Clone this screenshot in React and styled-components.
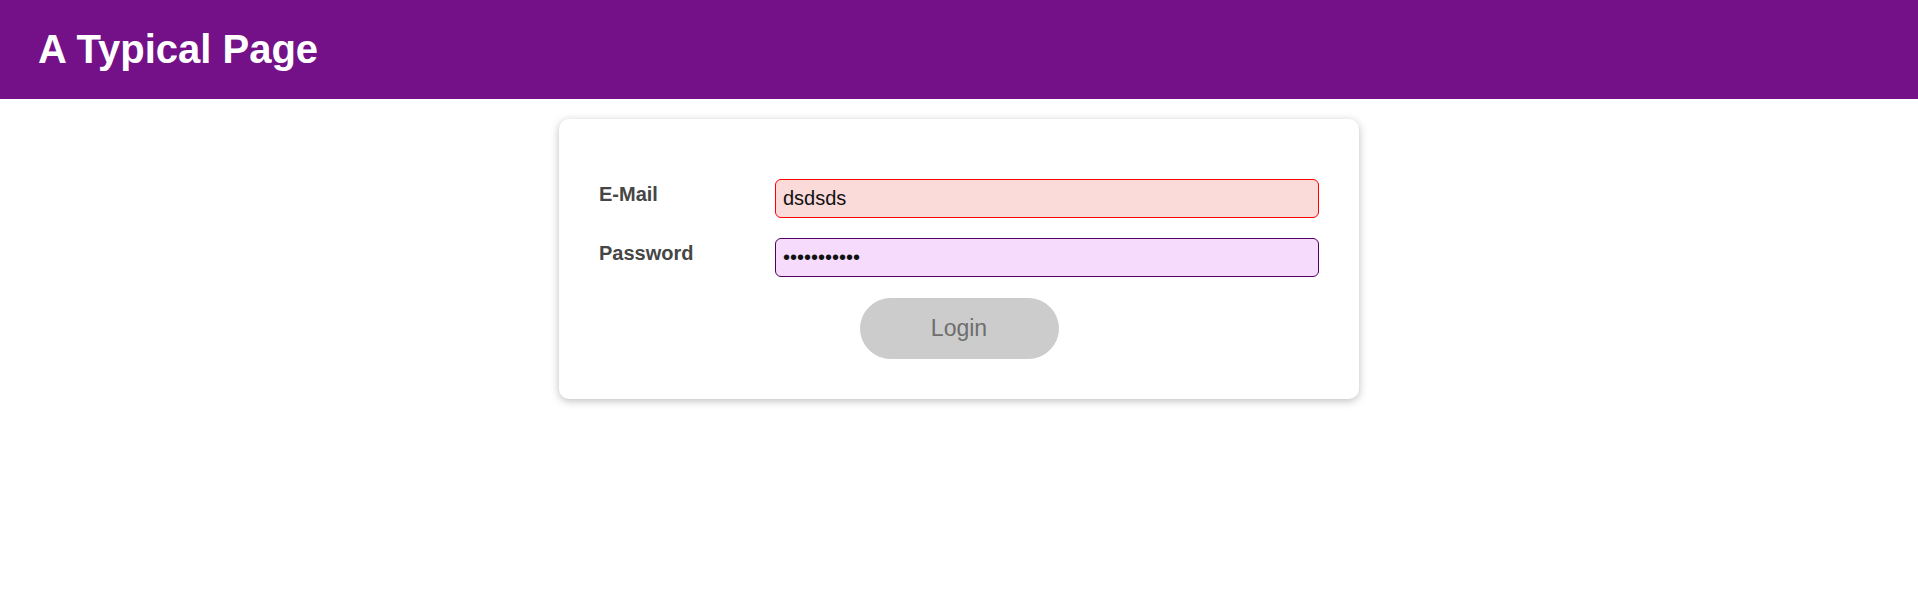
import { useState } from "react";
import styled, { createGlobalStyle } from "styled-components";

const GlobalStyle = createGlobalStyle`
    * { box-sizing: border-box; }
    html, body {
        margin: 0;
        background: #fff;
        font-family: "Liberation Sans", Arial, sans-serif;
        font-size: 20px;
    }
`
const Header = styled("header")`
    height: 99px;
    background: #741188;
    display: flex;
    align-items: center;
    padding: 0 38px;
    h1 {
        margin: 0;
        color: #fff;
        font-size: 40px;
        font-weight: bold;
    }
`
const Card = styled("div")`
    width: 800px;
    margin: 20px auto;
    padding: 40px 40px 40px;
    background: #fff;
    border-radius: 10px;
    box-shadow: 0 2px 8px rgba(0, 0, 0, 0.26);
`
const Form = styled("form")`
    display: flex;
    flex-direction: column;
    gap: 20px;
    padding-top: 20px;
`
const Control = styled("div")`
    display: flex;
    align-items: center;
`
const Label = styled("label")`
    width: 176px;
    flex-shrink: 0;
    font-weight: bold;
    font-size: 20px;
    color: #464646;
    margin-bottom: 9px;
`
const Input = styled("input")`
    flex: 1;
    min-width: 0;
    font: inherit;
    font-size: 20px;
    height: 39px;
    padding: 0 7px;
    border-radius: 6px;
    outline: none;
    color: #111;
    border: 1px solid ${(p) => (p.$invalid ? "red" : "#4f005f")};
    background: ${(p) => (p.$invalid ? "#fbdada" : "#f6dbfc")};
`
const Actions = styled("div")`
    text-align: center;
    padding-top: 1px;
`
const Button = styled("button")`
    font-family: inherit;
    font-size: 23px;
    width: 199px;
    height: 61px;
    border: 1px solid #ccc;
    border-radius: 31px;
    background: #ccc;
    color: #6e6e6e;
    cursor: not-allowed;
`

export default function App() {
    const [email, setEmail] = useState("dsdsds");
    const [password, setPassword] = useState("12345678901");
    return (
        <>
            <GlobalStyle />
            <Header>
                <h1>A Typical Page</h1>
            </Header>
            <Card>
                <Form onSubmit={(e) => e.preventDefault()}>
                    <Control>
                        <Label htmlFor="email">E-Mail</Label>
                        <Input id="email" type="email" $invalid value={email} onChange={(e) => setEmail(e.target.value)} />
                    </Control>
                    <Control>
                        <Label htmlFor="password">Password</Label>
                        <Input id="password" type="password" value={password} onChange={(e) => setPassword(e.target.value)} />
                    </Control>
                    <Actions>
                        <Button type="submit" disabled>Login</Button>
                    </Actions>
                </Form>
            </Card>
        </>
    );
}
